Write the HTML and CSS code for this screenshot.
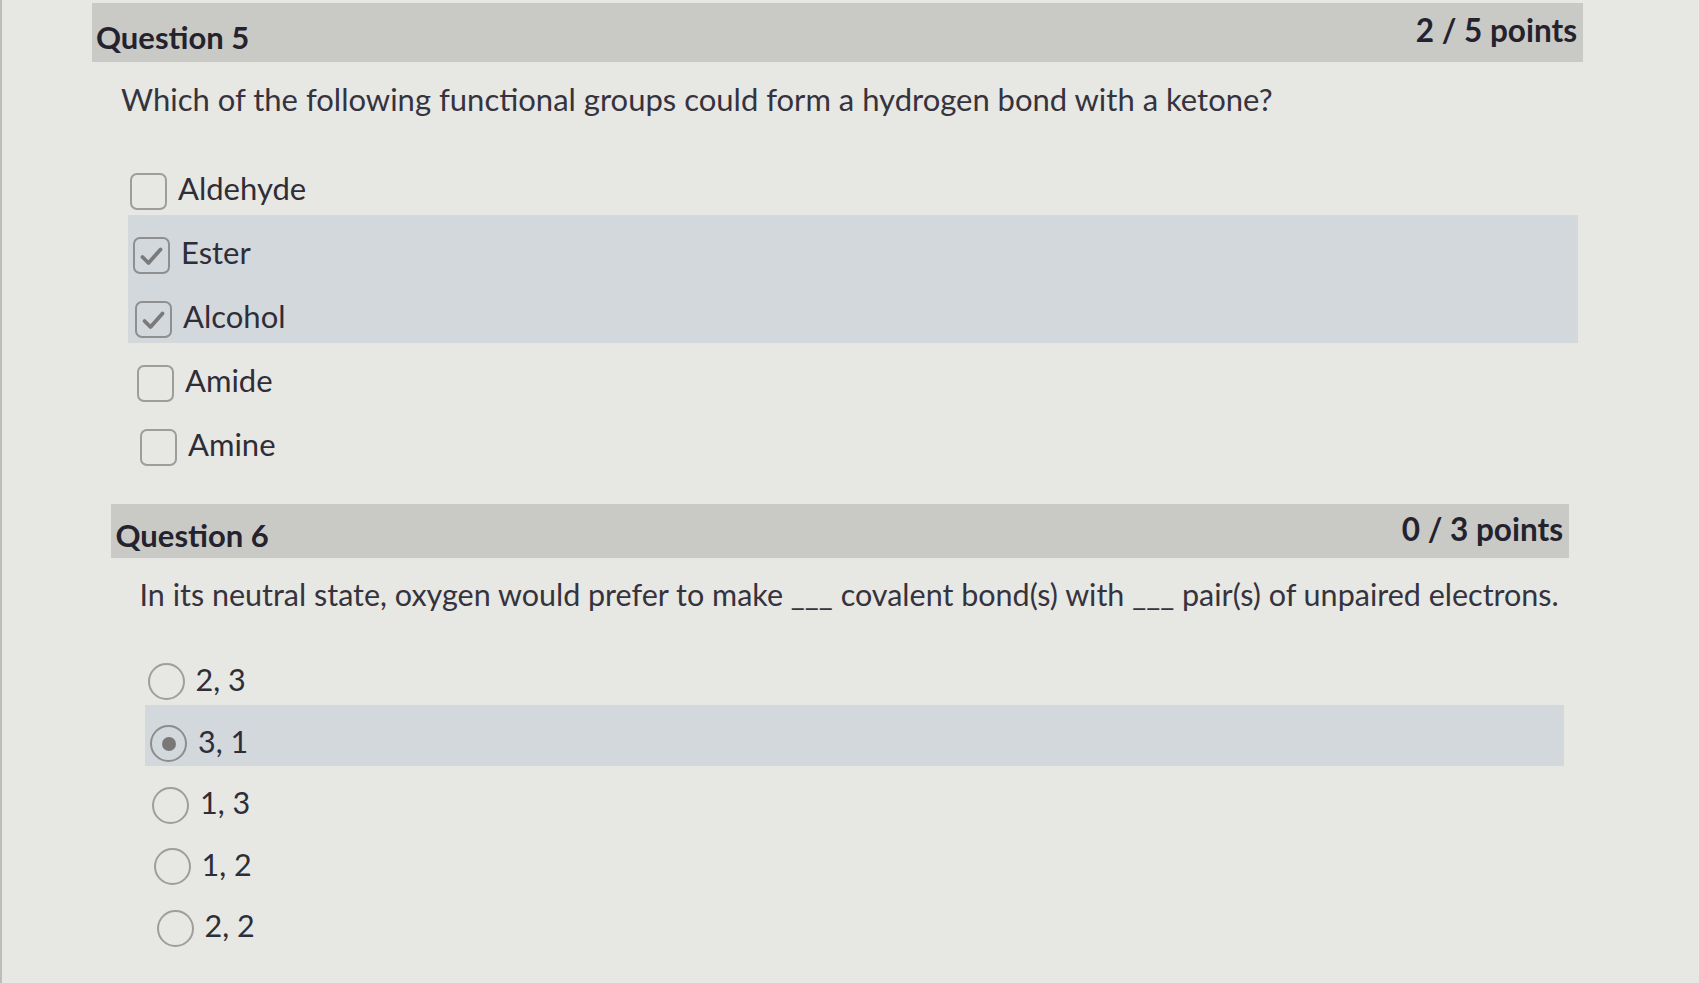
FILE: index.html
```html
<!DOCTYPE html>
<html lang="en">
<head>
<meta charset="utf-8">
<title>Quiz results</title>
<link rel="stylesheet" href="styles.css">
</head>
<body>
<div class="page">
  <section class="question q5">
    <header class="qhead q5head">
      <h2 class="qtitle">Question 5</h2>
      <span class="qpoints">2 / 5 points</span>
    </header>
    <p class="qtext q5text">Which of the following functional groups could form a hydrogen bond with a ketone?</p>
    <div class="options checks">
      <div class="opt c1"><span class="box"></span><span class="label">Aldehyde</span></div>
      <div class="band cband">
        <div class="opt c2"><span class="box checked"><svg viewBox="0 0 37 37" width="37" height="37"><path d="M9.5 20 L15.5 26 L27.5 12.5" fill="none" stroke="#7a7a7a" stroke-width="3.8" stroke-linecap="round" stroke-linejoin="round"/></svg></span><span class="label">Ester</span></div>
        <div class="opt c3"><span class="box checked"><svg viewBox="0 0 37 37" width="37" height="37"><path d="M9.5 20 L15.5 26 L27.5 12.5" fill="none" stroke="#7a7a7a" stroke-width="3.8" stroke-linecap="round" stroke-linejoin="round"/></svg></span><span class="label">Alcohol</span></div>
      </div>
      <div class="opt c4"><span class="box"></span><span class="label">Amide</span></div>
      <div class="opt c5"><span class="box"></span><span class="label">Amine</span></div>
    </div>
  </section>

  <section class="question q6">
    <header class="qhead q6head">
      <h2 class="qtitle">Question 6</h2>
      <span class="qpoints">0 / 3 points</span>
    </header>
    <p class="qtext q6text">In its neutral state, oxygen would prefer to make ___ covalent bond(s) with ___ pair(s) of unpaired electrons.</p>
    <div class="options radios">
      <div class="ropt o1"><span class="radio"></span><span class="label">2, 3</span></div>
      <div class="band rband">
        <div class="ropt o2"><span class="radio selected"><span class="dot"></span></span><span class="label">3, 1</span></div>
      </div>
      <div class="ropt o3"><span class="radio"></span><span class="label">1, 3</span></div>
      <div class="ropt o4"><span class="radio"></span><span class="label">1, 2</span></div>
      <div class="ropt o5"><span class="radio"></span><span class="label">2, 2</span></div>
    </div>
  </section>
</div>
</body>
</html>
```

FILE: styles.css
```css
html, body {
  margin: 0;
  padding: 0;
}
body {
  background: #e7e7e3;
  font-family: Lato, "Open Sans", sans-serif;
  color: #34323c;
  width: 1699px;
  height: 983px;
  overflow: hidden;
  border-left: 2px solid #bdbdb9;
  box-sizing: border-box;
}
.page {
  padding-top: 3px;
}
.question {
  display: flex;
  flex-direction: column;
}
.q5 {
  margin-left: 90px;
  width: 1491px;
}
.q6 {
  margin-left: 108.5px;
  width: 1458.5px;
  margin-top: 33px;
}
.qhead {
  background: #c9c9c6;
  display: flex;
  justify-content: space-between;
  align-items: flex-start;
  padding: 0 6px 0 4px;
  box-sizing: border-box;
}
.q5head {
  height: 59px;
}
.q6head {
  height: 54px;
  padding-left: 5px;
}
.qtitle {
  margin: 0;
  font-size: 31px;
  line-height: 31px;
  font-weight: 700;
  color: #24222c;
}
.q5head .qtitle {
  padding-top: 19px;
}
.q6head .qtitle {
  padding-top: 16px;
}
.qpoints {
  font-size: 31.5px;
  line-height: 31px;
  font-weight: 700;
  color: #24222c;
}
.q5head .qpoints {
  padding-top: 12px;
}
.q6head .qpoints {
  padding-top: 10px;
}
.qtext {
  margin: 0;
  color: #35333d;
}
.q5text {
  margin-top: 22px;
  padding-left: 29px;
  font-size: 31px;
  line-height: 31px;
}
.q6text {
  margin-top: 21px;
  padding-left: 29px;
  font-size: 30.5px;
  line-height: 30px;
}
.options {
  display: flex;
  flex-direction: column;
}
.checks {
  margin-top: 36px;
}
.radios {
  margin-top: 34px;
}
.band {
  background: #d3d8dc;
  display: flex;
  flex-direction: column;
}
.cband {
  margin-left: 36px;
  margin-right: 5.5px;
}
.rband {
  margin-left: 34.5px;
  margin-right: 5.5px;
}
.opt {
  height: 64px;
  box-sizing: border-box;
  padding-top: 16px;
  display: flex;
  align-items: center;
  gap: 11px;
}
.c1 { padding-left: 38px; }
.c2 { padding-left: 5px; }
.c3 { padding-left: 7px; }
.c4 { padding-left: 45px; }
.c5 { padding-left: 48px; }
.box {
  width: 37px;
  height: 37px;
  border: 2px solid #9d9d9b;
  border-radius: 7px;
  box-sizing: border-box;
  display: flex;
  align-items: center;
  justify-content: center;
  flex: none;
}
.box svg {
  display: block;
  margin: -2px;
}
.box.checked {
  border-color: #8f8f8f;
}
.label {
  color: #2f2d37;
  padding-bottom: 6px;
}
.opt .label {
  font-size: 31px;
  line-height: 31px;
}
.ropt .label {
  font-size: 30.5px;
  line-height: 30px;
}
.ropt {
  height: 61.6px;
  box-sizing: border-box;
  padding-top: 16.4px;
  display: flex;
  align-items: center;
  gap: 11px;
}
.o1 { padding-left: 37px; }
.o2 { padding-left: 5px; }
.o3 { padding-left: 41.5px; }
.o4 { padding-left: 43px; }
.o5 { padding-left: 46px; }
.radio {
  width: 37px;
  height: 37px;
  border: 2px solid #9e9e9c;
  border-radius: 50%;
  box-sizing: border-box;
  display: flex;
  align-items: center;
  justify-content: center;
  flex: none;
}
.radio.selected {
  border-color: #8d8d8d;
}
.dot {
  width: 14px;
  height: 14px;
  border-radius: 50%;
  background: #787878;
}
```
